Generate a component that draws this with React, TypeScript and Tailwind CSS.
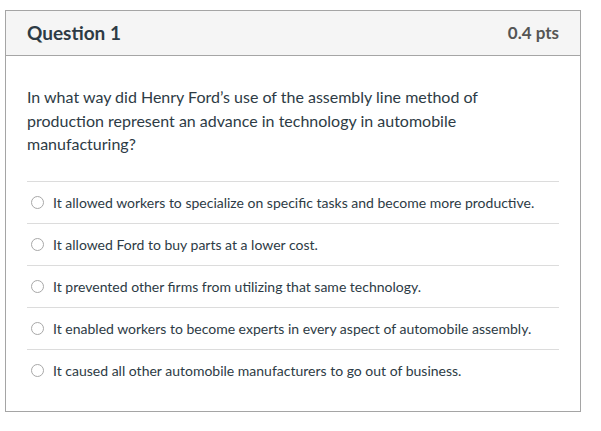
import React from "react";

const answers = [
  "It allowed workers to specialize on specific tasks and become more productive.",
  "It allowed Ford to buy parts at a lower cost.",
  "It prevented other firms from utilizing that same technology.",
  "It enabled workers to become experts in every aspect of automobile assembly.",
  "It caused all other automobile manufacturers to go out of business.",
];

export default function App() {
  return (
    <div className="w-[601px] h-[431px] bg-white pt-[10px] pl-[5px]" style={{ fontFamily: "Lato, 'Open Sans', sans-serif" }}>
      <div className="w-[576px] h-[402px] border border-[#a5a5a5] flex flex-col">
        <div className="h-[45px] bg-[#f5f5f5] border-b border-[#a5a5a5] flex items-center justify-between px-[21px]">
          <span className="text-[19px] font-bold text-[#2d3b45]">Question 1</span>
          <span className="text-[17px] font-bold text-[#555]">0.4 pts</span>
        </div>
        <div className="px-[21px] pt-[29px]">
          <p className="text-[16px] leading-[23.5px] text-[#2d3b45] w-[500px]">
            In what way did Henry Ford’s use of the assembly line method of production represent an advance in technology in automobile manufacturing?
          </p>
          <div className="mt-[25px]">
            {answers.map((a) => (
              <div key={a} className="h-[42px] border-t border-[#dcdcdc] flex items-center pl-[4px]">
                <span className="w-[13px] h-[13px] rounded-full border border-[#a8a8a8] bg-white mr-[9px] shrink-0" />
                <span className="text-[14px] text-[#2d3b45]">{a}</span>
              </div>
            ))}
          </div>
        </div>
      </div>
    </div>
  );
}
